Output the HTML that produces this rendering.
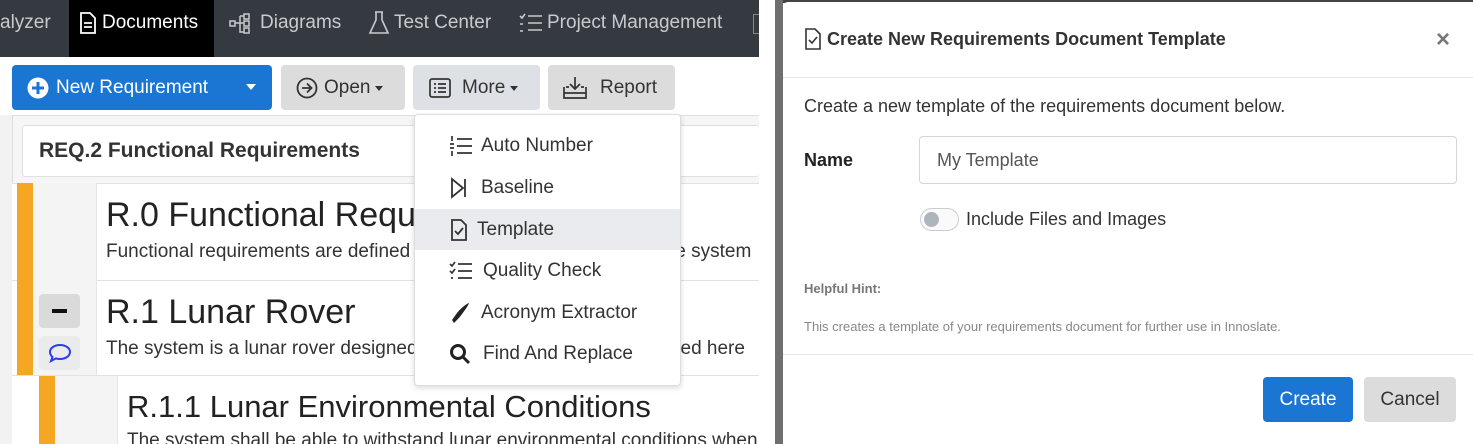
<!DOCTYPE html>
<html><head><meta charset="utf-8"><style>
*{box-sizing:border-box;margin:0;padding:0}
body{width:1473px;height:444px;overflow:hidden;background:#fff;font-family:"Liberation Sans",Arial,sans-serif;position:relative;color:#222}
.a{position:absolute}
.clip{position:absolute;left:0;top:0;width:759px;height:444px;overflow:hidden}
.nav{left:0;top:0;width:759px;height:57px;background:#343a40;color:#c8cbce;font-size:19px}
.nav span{position:absolute;top:12px;white-space:nowrap}
.btn{position:absolute;top:65px;height:45px;border-radius:4px;font-size:19px;display:flex;align-items:center;color:#333}
.row{position:absolute;left:12px;width:747px;border-top:1px solid #e2e2e2}
.menu{left:414px;top:114px;width:267px;height:272px;background:#fff;border:1px solid #ddd;border-radius:4px;box-shadow:0 2px 6px rgba(0,0,0,.15)}
.mi{position:absolute;left:0;width:265px;height:41px;font-size:19px;color:#333;display:flex;align-items:center}
.mi svg{position:absolute;left:34px}
.mi b{font-weight:normal;position:absolute;left:66px}
</style></head><body>
<div class="clip">
<div class="a nav">
<span style="left:0">alyzer</span>
<div class="a" style="left:69px;top:0;width:145px;height:57px;background:#000"></div>
<svg class="a" style="left:79px;top:12px" width="18" height="22" viewBox="0 0 18 22" fill="none" stroke="#fff" stroke-width="1.8"><path d="M2 1h9l5 5v15H2z M5 11h8M5 15h8"/></svg>
<span style="left:102px;color:#fff">Documents</span>
<svg class="a" style="left:229px;top:12px" width="24" height="24" viewBox="0 0 24 24" fill="none" stroke="#c8cbce" stroke-width="1.5"><rect x="1" y="9" width="5" height="5"/><rect x="15" y="2" width="5" height="5"/><rect x="15" y="9" width="5" height="5"/><rect x="15" y="16" width="5" height="5"/><path d="M6 11h9M11 4v16h4M11 4h4"/></svg>
<span style="left:260px">Diagrams</span>
<svg class="a" style="left:368px;top:11px" width="22" height="24" viewBox="0 0 22 24" fill="none" stroke="#c8cbce" stroke-width="1.6"><path d="M7 1h8M8 1v8L2 22h18L14 9V1"/></svg>
<span style="left:394px">Test Center</span>
<svg class="a" style="left:519px;top:12px" width="24" height="22" viewBox="0 0 24 22" fill="none" stroke="#c8cbce" stroke-width="1.6"><path d="M1 4l2 2 3-4M1 12h3M1 19h3M9 4h14M9 11h14M9 18h14"/></svg>
<span style="left:547px">Project Management</span>
<div class="a" style="left:753px;top:14px;width:6px;height:20px;border:1px solid #888;border-right:none"></div>
</div>
<div class="btn" style="left:12px;width:260px;background:#1a76d2;color:#fff">
<svg style="margin-left:15px" width="22" height="22" viewBox="0 0 22 22"><circle cx="11" cy="11" r="10.5" fill="#fff"/><path d="M11 5v12M5 11h12" stroke="#1a76d2" stroke-width="3"/></svg>
<span style="margin-left:7px">New Requirement</span>
<span style="position:absolute;left:234px;top:19px;border:5px solid transparent;border-top:6px solid #fff"></span></div>
<div class="btn" style="left:281px;width:124px;background:#dcdcdc">
<svg style="margin-left:15px" width="22" height="22" viewBox="0 0 22 22" fill="none" stroke="#333" stroke-width="1.8"><circle cx="11" cy="11" r="9.5"/><path d="M6 11h9M11 6.5l4.5 4.5L11 15.5"/></svg>
<span style="margin-left:6px">Open</span><span style="margin-left:5px;margin-top:6px;border:4.5px solid transparent;border-top:5px solid #333"></span></div>
<div class="btn" style="left:413px;width:127px;background:#dde1e6">
<svg style="margin-left:16px" width="22" height="20" viewBox="0 0 22 20" fill="none" stroke="#333" stroke-width="1.7"><rect x="1" y="1" width="20" height="18" rx="2"/><path d="M5 6h2M9 6h8M5 10h2M9 10h8M5 14h2M9 14h8"/></svg>
<span style="margin-left:11px">More</span><span style="margin-left:5px;margin-top:6px;border:4.5px solid transparent;border-top:5px solid #333"></span></div>
<div class="btn" style="left:548px;width:127px;background:#dcdcdc">
<svg style="margin-left:14px" width="26" height="24" viewBox="0 0 26 24" fill="none" stroke="#333" stroke-width="1.7"><path d="M13 1v12M8 8l5 5 5-5M4 11h3M19 11h3M2 11v11h22V11M2 17h22"/></svg>
<span style="margin-left:12px">Report</span></div>
<div class="a" style="left:0;top:115px;width:13px;height:329px;background:#f2f2f2;border-right:1px solid #ddd"></div>
<div class="a" style="left:13px;top:115px;width:746px;height:70px;background:#f6f6f6;border-top:1px solid #e0e0e0"></div>
<div class="a" style="left:22px;top:125px;width:737px;height:52px;background:#fff;border:1px solid #e0e0e0;border-right:none;border-radius:3px;font-size:21px;font-weight:bold;color:#333;padding:13px 0 0 16px">REQ.2 Functional Requirements</div>
<div class="row" style="top:183px;height:97px;background:#fff"></div>
<div class="a" style="left:17px;top:183px;width:16px;height:97px;background:#f5a623"></div>
<div class="a" style="left:33px;top:183px;width:64px;height:97px;background:#f4f4f4;border-right:1px solid #e6e6e6"></div>
<div class="a" style="left:106px;top:196px;font-size:34px;color:#222;white-space:nowrap">R.0 Functional Requirements</div>
<div class="a" style="left:106px;top:241px;font-size:19px;color:#333;white-space:nowrap">Functional requirements are defined in this section and describes the system</div>
<div class="row" style="top:280px;height:96px;background:#fff"></div>
<div class="a" style="left:17px;top:280px;width:16px;height:96px;background:#f5a623"></div>
<div class="a" style="left:33px;top:280px;width:64px;height:96px;background:#f4f4f4;border-right:1px solid #e6e6e6"></div>
<div class="a" style="left:39px;top:294px;width:41px;height:34px;background:#dadada;border-radius:4px"><div class="a" style="left:13px;top:15px;width:15px;height:4px;background:#111"></div></div>
<div class="a" style="left:39px;top:336px;width:41px;height:34px;background:#ebebeb;border-radius:4px"><svg class="a" style="left:9px;top:7px" width="24" height="20" viewBox="0 0 24 20" fill="none" stroke="#2b3fe8" stroke-width="2"><path d="M12 2c5.5 0 10 3 10 7s-4.5 7-10 7c-1.5 0-3-.2-4-.6L3 18l1.5-4C3 12.7 2 11 2 9c0-4 4.5-7 10-7z"/></svg></div>
<div class="a" style="left:106px;top:293px;font-size:34px;color:#222">R.1 Lunar Rover</div>
<div class="a" style="left:106px;top:338px;font-size:19px;color:#333;white-space:nowrap">The system is a lunar rover designed to meet the requirements defined here</div>
<div class="row" style="top:375px;height:69px;background:#fff"></div>
<div class="a" style="left:39px;top:376px;width:16px;height:68px;background:#f5a623"></div>
<div class="a" style="left:55px;top:376px;width:63px;height:68px;background:#f4f4f4;border-right:1px solid #e6e6e6"></div>
<div class="a" style="left:127px;top:389px;font-size:31px;color:#222;white-space:nowrap">R.1.1 Lunar Environmental Conditions</div>
<div class="a" style="left:127px;top:430px;font-size:19px;color:#333;white-space:nowrap">The system shall be able to withstand lunar environmental conditions when</div>
<div class="a menu">
<div class="mi" style="top:10px"><svg width="24" height="22" viewBox="0 0 24 22" fill="none" stroke="#333" stroke-width="1.7"><path d="M3 1v5M1 9h4M1 13h4M3 16v5M8 4h15M8 11h15M8 18h15"/></svg><b>Auto Number</b></div>
<div class="mi" style="top:52px"><svg width="20" height="22" viewBox="0 0 20 22" fill="none" stroke="#333" stroke-width="1.8"><path d="M3 2v18l11-9zM16 2v18"/></svg><b>Baseline</b></div>
<div class="mi" style="top:94px;background:#e9ebee"><svg width="20" height="22" viewBox="0 0 20 22" fill="none" stroke="#333" stroke-width="1.8"><path d="M3 1h9l5 5v15H3z M6 12l3 3 5-6"/></svg><b style="left:62px">Template</b></div>
<div class="mi" style="top:135px"><svg width="24" height="22" viewBox="0 0 24 22" fill="none" stroke="#333" stroke-width="1.7"><path d="M1 4l2 2 3-4M1 11l2 2 3-4M2 18h2M9 4h14M9 11h14M9 18h14"/></svg><b style="left:68px">Quality Check</b></div>
<div class="mi" style="top:177px"><svg width="22" height="22" viewBox="0 0 22 22"><path d="M20 1c-3 1-9 6-12 10l-5 7 2 3c3-3 6-6 8-9 3-4 6-8 7-11z" fill="#222"/></svg><b>Acronym Extractor</b></div>
<div class="mi" style="top:218px"><svg width="22" height="22" viewBox="0 0 22 22" fill="none" stroke="#222" stroke-width="3"><circle cx="9" cy="9" r="6.5"/><path d="M14 14l6 6"/></svg><b style="left:68px">Find And Replace</b></div>
</div>
</div>
<div class="a" style="left:775px;top:0;width:8px;height:444px;background:#6f6f6f"></div>
<div class="a" style="left:783px;top:0;width:690px;height:3px;background:#444"></div>
<div class="a" style="left:783px;top:2px;width:690px;height:440px;background:#fff;border-radius:5px 0 0 5px"></div>
<svg class="a" style="left:804px;top:28px" width="18" height="22" viewBox="0 0 18 22" fill="none" stroke="#333" stroke-width="1.6"><path d="M2 1h9l5 5v15H2z M5 12l3 3 5-6"/></svg>
<div class="a" style="left:827px;top:29px;font-size:18px;font-weight:bold;color:#333">Create New Requirements Document Template</div>
<div class="a" style="left:1436px;top:26px;font-size:24px;font-weight:bold;color:#777">×</div>
<div class="a" style="left:783px;top:77px;width:690px;height:1px;background:#e5e5e5"></div>
<div class="a" style="left:804px;top:96px;font-size:18px;color:#333">Create a new template of the requirements document below.</div>
<div class="a" style="left:804px;top:150px;font-size:18px;font-weight:bold;color:#222">Name</div>
<div class="a" style="left:919px;top:136px;width:538px;height:48px;border:1px solid #d6d6d6;border-radius:4px;font-size:18px;color:#555;padding:13px 0 0 17px">My Template</div>
<div class="a" style="left:920px;top:208px;width:39px;height:23px;border:1px solid #ccc;border-radius:12px;background:#fafafa"><div class="a" style="left:3px;top:3px;width:15px;height:15px;border-radius:50%;background:#adb5bd"></div></div>
<div class="a" style="left:966px;top:209px;font-size:18px;color:#333">Include Files and Images</div>
<div class="a" style="left:804px;top:281px;font-size:13px;font-weight:bold;color:#777">Helpful Hint:</div>
<div class="a" style="left:804px;top:319px;font-size:13px;color:#888">This creates a template of your requirements document for further use in Innoslate.</div>
<div class="a" style="left:783px;top:354px;width:690px;height:1px;background:#e5e5e5"></div>
<div class="a" style="left:1263px;top:377px;width:90px;height:45px;background:#1a76d2;border-radius:4px;color:#fff;font-size:19px;text-align:center;line-height:45px">Create</div>
<div class="a" style="left:1364px;top:377px;width:92px;height:45px;background:#dcdcdc;border-radius:4px;color:#333;font-size:19px;text-align:center;line-height:45px">Cancel</div>
</body></html>
